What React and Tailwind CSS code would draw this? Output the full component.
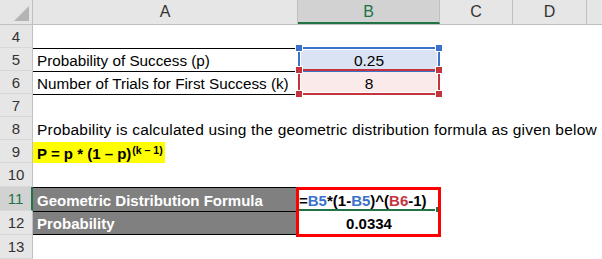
import React from "react";

const Row = ({ n, h, sel, children }) => (
    <div className={`flex ${h}`}>
        <div
            className={`w-[33px] shrink-0 flex items-center justify-center border-b border-b-[#d8d8d8] text-[15px] ${
                sel
                    ? "bg-[#d2d2d2] text-[#217346] border-r-2 border-r-[#217346]"
                    : "bg-[#e6e6e6] text-[#333] border-r border-r-[#c0c0c0]"
            }`}
        >
            {n}
        </div>
        {children}
    </div>
);

const Handle = ({ pos, color }) => (
    <div className={`absolute w-[6px] h-[6px] ${color} ${pos} border border-white box-content`} />
);

const Empty = () => (
    <>
        <div className="w-[73px] shrink-0" />
        <div className="w-[74px] shrink-0" />
        <div className="flex-1" />
    </>
);

export default function App() {
    return (
        <div className="w-[602px] h-[259px] overflow-hidden bg-white text-[15.5px] text-black font-['Liberation_Sans',Arial,sans-serif] leading-none">
            {/* column headers */}
            <div className="flex h-[25px] bg-[#e6e6e6] border-b border-b-[#c0c0c0] text-[#333] text-[16px]">
                <div className="w-[33px] shrink-0 border-r border-r-[#c0c0c0] flex items-end justify-end p-[3px]">
                    <svg width="15" height="15" viewBox="0 0 15 15">
                        <polygon points="15,0 15,15 0,15" fill="#b4b4b4" />
                    </svg>
                </div>
                <div className="w-[265px] shrink-0 border-r border-r-[#c0c0c0] flex items-center justify-center">A</div>
                <div className="w-[142px] shrink-0 bg-[#d2d2d2] border-b-2 border-b-[#217346] border-r border-r-[#c0c0c0] flex items-center justify-center text-[#217346] pt-[2px]">B</div>
                <div className="w-[73px] shrink-0 border-r border-r-[#c0c0c0] flex items-center justify-center">C</div>
                <div className="w-[74px] shrink-0 border-r border-r-[#c0c0c0] flex items-center justify-center">D</div>
                <div className="flex-1" />
            </div>

            <Row n={4} h="h-[23px]">
                <div className="w-[265px] shrink-0" />
                <div className="w-[142px] shrink-0" />
                <Empty />
            </Row>

            <Row n={5} h="h-[23px]">
                <div className="w-[265px] shrink-0 border-t border-black flex items-center pl-[4px] pt-[2px] text-[15.25px] whitespace-nowrap">
                    Probability of Success (p)
                </div>
                <div className="w-[142px] shrink-0 relative flex items-center justify-center pt-[2px]">
                    <div className="absolute left-0 right-0 top-[-1px] bottom-[-1px] border-2 border-[#3a72cc] p-[1px]">
                        <div className="w-full h-full bg-[#dae3f3]" />
                    </div>
                    <span className="relative">0.25</span>
                    <Handle pos="left-[-3px] top-[-4px]" color="bg-[#3a72cc]" />
                    <Handle pos="right-[-3px] top-[-4px]" color="bg-[#3a72cc]" />
                </div>
                <Empty />
            </Row>

            <Row n={6} h="h-[23px]">
                <div className="w-[265px] shrink-0 border-t border-black flex items-center pl-[4px] pt-[2px] text-[15.25px] whitespace-nowrap">
                    Number of Trials for First Success (k)
                </div>
                <div className="w-[142px] shrink-0 relative flex items-center justify-center pt-[2px]">
                    <div className="absolute left-0 right-0 top-[-2px] bottom-[-1px] border-2 border-[#c4343f] p-[1px]">
                        <div className="w-full h-full bg-[#fbeaea]" />
                    </div>
                    <span className="relative">8</span>
                    <Handle pos="left-[-3px] top-[-5px]" color="bg-[#c4343f]" />
                    <Handle pos="right-[-3px] top-[-5px]" color="bg-[#c4343f]" />
                    <Handle pos="left-[-3px] bottom-[-4px]" color="bg-[#c4343f]" />
                    <Handle pos="right-[-3px] bottom-[-4px]" color="bg-[#c4343f]" />
                </div>
                <Empty />
            </Row>

            <Row n={7} h="h-[23px]">
                <div className="w-[265px] shrink-0 border-t border-black" />
                <div className="w-[142px] shrink-0" />
                <Empty />
            </Row>

            <Row n={8} h="h-[23px]">
                <div className="w-[265px] shrink-0 flex items-center pl-[4px] pt-[2px] whitespace-nowrap overflow-visible tracking-[0.2px]">
                    Probability is calculated using the geometric distribution formula as given below
                </div>
            </Row>

            <Row n={9} h="h-[23px]">
                <div className="w-[265px] shrink-0 flex items-end">
                    <div className="h-[21px] w-[132px] bg-[#ffff00] flex items-center pl-[4px] pt-[2px] text-[15px] font-bold whitespace-nowrap">
                        P = p * (1 – p)
                        <span className="text-[10.5px] self-start mt-[1px] ml-[1px]">(k – 1)</span>
                    </div>
                </div>
                <div className="w-[142px] shrink-0" />
                <Empty />
            </Row>

            <Row n={10} h="h-[24px]">
                <div className="w-[265px] shrink-0" />
                <div className="w-[142px] shrink-0" />
                <Empty />
            </Row>

            <Row n={11} h="h-[24px]" sel>
                <div className="w-[265px] shrink-0 bg-[#808080] border-t border-black flex items-center pl-[4px] pt-[2px] text-white text-[15px] font-bold">
                    Geometric Distribution Formula
                </div>
                <div className="w-[142px] shrink-0 relative flex items-center pl-[1px] pt-[2px] text-[15px] font-bold whitespace-nowrap">
                    <div className="absolute left-[1px] right-[1px] bottom-0 h-[2px] bg-[#217346]" />
                    <div className="absolute right-[-2px] bottom-[-2px] w-[5px] h-[5px] bg-[#217346] border border-white box-content" />
                    <span>=</span>
                    <span className="text-[#3a72cc]">B5</span>
                    <span>*(1-</span>
                    <span className="text-[#3a72cc]">B5</span>
                    <span>)^(</span>
                    <span className="text-[#c4343f]">B6</span>
                    <span>-1)</span>
                    <div className="absolute left-[-2px] top-0 w-[145px] h-[50px] border-[3px] border-[#ff0000]" />
                </div>
                <Empty />
            </Row>

            <Row n={12} h="h-[24px]">
                <div className="w-[265px] shrink-0 bg-[#808080] border-t border-b border-black flex items-center pl-[4px] pt-[1px] text-white text-[15px] font-bold">
                    Probability
                </div>
                <div className="w-[142px] shrink-0 flex items-center justify-center pt-[1px] text-[15px] font-bold">
                    0.0334
                </div>
                <Empty />
            </Row>

            <Row n={13} h="h-[24px]">
                <div className="w-[265px] shrink-0" />
                <div className="w-[142px] shrink-0" />
                <Empty />
            </Row>
        </div>
    );
}
